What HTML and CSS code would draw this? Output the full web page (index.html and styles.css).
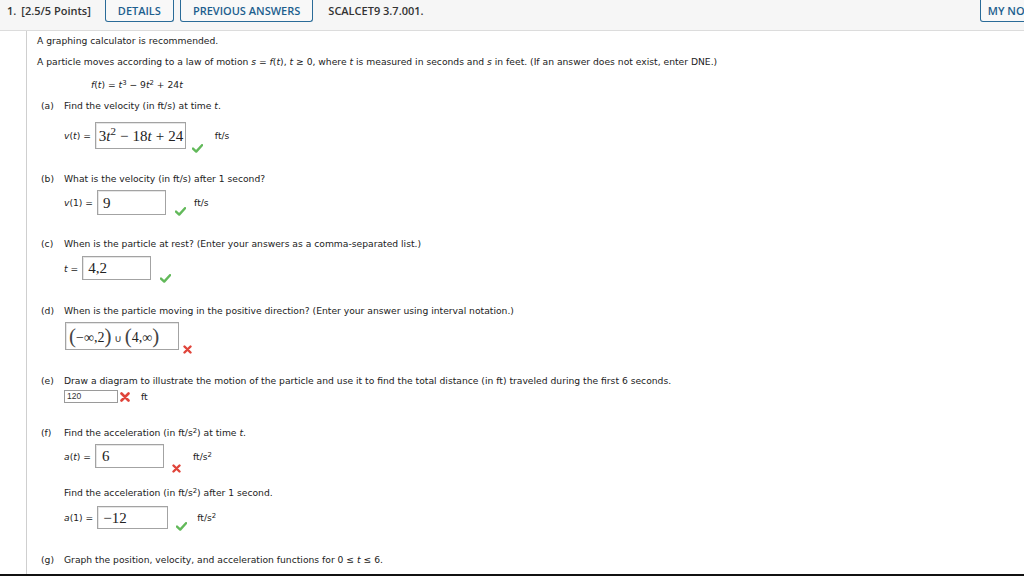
FILE: index.html
```html
<!DOCTYPE html>
<html lang="en">
<head>
<meta charset="utf-8">
<title>SCALCET9 3.7.001</title>
<link rel="stylesheet" href="styles.css">
</head>
<body>
<div class="page">
  <header class="top">
    <span class="qnum"><span class="qn">1.</span>[2.5/5 Points]</span>
    <span class="btn">DETAILS</span>
    <span class="btn btn-prev">PREVIOUS ANSWERS</span>
    <span class="code">SCALCET9 3.7.001.</span>
    <span class="btn btn-notes">MY NOTES</span>
  </header>
  <main class="main">
    <p class="line p1">A graphing calculator is recommended.</p>
    <p class="line p2">A particle moves according to a law of motion <i>s</i> = <i>f</i>(<i>t</i>), <i>t</i> &ge; 0, where <i>t</i> is measured in seconds and <i>s</i> in feet. (If an answer does not exist, enter DNE.)</p>
    <p class="line formula"><i>f</i>(<i>t</i>) = <i>t</i><sup>3</sup> &minus; 9<i>t</i><sup>2</sup> + 24<i>t</i></p>

    <div class="line part part-a"><span class="letter">(a)</span><span>Find the velocity (in ft/s) at time <i>t</i>.</span></div>
    <div class="row row-a">
      <span class="var"><i>v</i>(<i>t</i>) =</span>
      <span class="ans ans-a"><span class="mv">3<i>t</i><sup class="msup">2</sup><span class="op">&minus;</span>18<i>t</i><span class="op">+</span>24</span></span>
      <svg class="mark ok ok-a" width="11" height="9" viewBox="0 0 11 9"><path d="M1 4.6 L4.2 7.6 L10 1.2" fill="none" stroke="#62b95a" stroke-width="2.4" stroke-linecap="round" stroke-linejoin="round"/></svg>
      <span class="unit unit-a">ft/s</span>
    </div>

    <div class="line part part-b"><span class="letter">(b)</span><span>What is the velocity (in ft/s) after 1 second?</span></div>
    <div class="row row-b">
      <span class="var"><i>v</i>(1) =</span>
      <span class="ans ans-b"><span class="mv">9</span></span>
      <svg class="mark ok ok-b" width="11" height="9" viewBox="0 0 11 9"><path d="M1 4.6 L4.2 7.6 L10 1.2" fill="none" stroke="#62b95a" stroke-width="2.4" stroke-linecap="round" stroke-linejoin="round"/></svg>
      <span class="unit unit-b">ft/s</span>
    </div>

    <div class="line part part-c"><span class="letter">(c)</span><span>When is the particle at rest? (Enter your answers as a comma-separated list.)</span></div>
    <div class="row row-c">
      <span class="var"><i>t</i> =</span>
      <span class="ans ans-c"><span class="mv">4,2</span></span>
      <svg class="mark ok ok-c" width="11" height="9" viewBox="0 0 11 9"><path d="M1 4.6 L4.2 7.6 L10 1.2" fill="none" stroke="#62b95a" stroke-width="2.4" stroke-linecap="round" stroke-linejoin="round"/></svg>
    </div>

    <div class="line part part-d"><span class="letter">(d)</span><span>When is the particle moving in the positive direction? (Enter your answer using interval notation.)</span></div>
    <div class="row row-d">
      <span class="ans ans-d"><span class="mv"><span class="paren">(</span>&minus;&infin;,2<span class="paren">)</span><span class="cup">&cup;</span><span class="paren">(</span>4,&infin;<span class="paren">)</span></span></span>
      <svg class="mark bad bad-d" width="9" height="9" viewBox="0 0 9 9"><path d="M1.5 1.5 L7.5 7.5 M7.5 1.5 L1.5 7.5" fill="none" stroke="#e0443a" stroke-width="2.4" stroke-linecap="round"/></svg>
    </div>

    <div class="line part part-e"><span class="letter">(e)</span><span>Draw a diagram to illustrate the motion of the particle and use it to find the total distance (in ft) traveled during the first 6 seconds.</span></div>
    <div class="row row-e">
      <span class="small-input">120</span>
      <svg class="mark bad bad-e" width="10" height="10" viewBox="0 0 10 10"><path d="M1.5 1.5 L8.5 8.5 M8.5 1.5 L1.5 8.5" fill="none" stroke="#e0443a" stroke-width="2.6" stroke-linecap="round"/></svg>
      <span class="unit unit-e">ft</span>
    </div>

    <div class="line part part-f"><span class="letter">(f)</span><span>Find the acceleration (in ft/s<sup>2</sup>) at time <i>t</i>.</span></div>
    <div class="row row-f">
      <span class="var"><i>a</i>(<i>t</i>) =</span>
      <span class="ans ans-f"><span class="mv">6</span></span>
      <svg class="mark bad bad-f" width="9" height="9" viewBox="0 0 9 9"><path d="M1.5 1.5 L7.5 7.5 M7.5 1.5 L1.5 7.5" fill="none" stroke="#e0443a" stroke-width="2.4" stroke-linecap="round"/></svg>
      <span class="unit unit-f">ft/s<sup>2</sup></span>
    </div>

    <p class="line sub">Find the acceleration (in ft/s<sup>2</sup>) after 1 second.</p>
    <div class="row row-f2">
      <span class="var"><i>a</i>(1) =</span>
      <span class="ans ans-f2"><span class="mv">&minus;12</span></span>
      <svg class="mark ok ok-f2" width="11" height="9" viewBox="0 0 11 9"><path d="M1 4.6 L4.2 7.6 L10 1.2" fill="none" stroke="#62b95a" stroke-width="2.4" stroke-linecap="round" stroke-linejoin="round"/></svg>
      <span class="unit unit-f2">ft/s<sup>2</sup></span>
    </div>

    <div class="line part part-g"><span class="letter">(g)</span><span>Graph the position, velocity, and acceleration functions for 0 &le; <i>t</i> &le; 6.</span></div>
  </main>
  <div class="bottombar"></div>
</div>
</body>
</html>
```
FILE: styles.css
```css
html, body {
  margin: 0;
  padding: 0;
  background: #ffffff;
}
.page {
  width: 1024px;
  height: 576px;
  overflow: hidden;
  font-family: "DejaVu Sans", Verdana, sans-serif;
  color: #222;
}
.top {
  display: flex;
  align-items: flex-start;
  height: 30px;
  background: #f6f6f6;
  border-bottom: 1px solid #dcdcdc;
  font-family: "Open Sans", "Liberation Sans", sans-serif;
  font-weight: 600;
  font-size: 11px;
  line-height: 21px;
}
.qnum {
  padding-left: 7px;
  color: #333;
  margin-right: 14px;
  white-space: nowrap;
}
.qn { margin-right: 5px; }
.btn {
  display: block;
  height: 21px;
  padding: 0 12px;
  border: 1px solid #2a6b98;
  border-top: none;
  border-radius: 0 0 3px 3px;
  color: #1d5f8e;
  background: #f8f8f8;
  white-space: nowrap;
}
.btn-prev {
  margin-left: 6px;
}
.code {
  margin-left: 15px;
  color: #333;
}
.btn-notes {
  margin-left: auto;
  margin-right: -27px;
  padding: 0 7px;
}
.main {
  margin-left: 26px;
  border-left: 1px solid #cfcfcf;
  padding-left: 10px;
  padding-top: 4px;
  height: 539px;
  font-size: 9.2px;
}
.line {
  margin: 0;
  height: 11px;
  line-height: 11px;
  white-space: nowrap;
}
sup {
  font-size: 75%;
  line-height: 0;
  vertical-align: 3px;
}
.p2 { margin-top: 10px; }
.formula {
  margin-top: 11px;
  height: 12px;
  line-height: 13px;
  padding-left: 54px;
}
.part { display: flex; padding-left: 4px; }
.letter { width: 23px; }
.part-a { margin-top: 10px; }
.part-b { margin-top: 24px; }
.part-c { margin-top: 23px; }
.part-d { margin-top: 25px; }
.part-e { margin-top: 25px; }
.part-f { margin-top: 24px; }
.sub { margin-top: 19px; padding-left: 27px; }
.part-g { margin-top: 25px; }

.row {
  display: flex;
  align-items: center;
  padding-left: 27px;
}
.row-a { margin-top: 11px; }
.row-b { margin-top: 6px; }
.row-c { margin-top: 7px; }
.row-d { margin-top: 6px; }
.row-e { margin-top: 4px; }
.row-f { margin-top: 6px; }
.row-f2 { margin-top: 8px; }

.var { margin-right: 4px; white-space: nowrap; }
.ans {
  box-sizing: border-box;
  display: flex;
  align-items: center;
  border: 1px solid #a3a3a3;
  box-shadow: inset 1px 1px 0 #e6e6e6;
  font-family: "Liberation Serif", "DejaVu Serif", serif;
  font-size: 15px;
  color: #222;
  padding: 0 5px;
  white-space: nowrap;
}
.mv { display: block; line-height: 18px; }
.msup { font-size: 11px; vertical-align: 6px; }
.op { margin: 0 4px; }
.ans-a { width: 91px; height: 27px; padding-left: 3px; }
.ans-b { width: 69px; height: 25px; }
.ans-c { width: 69px; height: 24px; }
.ans-d { width: 114px; height: 28px; margin-left: 1px; font-size: 14px; padding: 0 3px; }
.ans-f { width: 69px; height: 24px; padding-left: 6px; }
.ans-f2 { width: 71px; height: 23px; }
.paren { font-size: 21px; line-height: 1; position: relative; top: 1px; color: #444; }
.cup { margin: 0 3px; font-family: "DejaVu Sans", sans-serif; font-size: 10px; }

.mark { display: block; flex: none; }
.ok, .bad { align-self: flex-end; }
.ok-a { margin-left: 6px; margin-bottom: -4px; }
.ok-b { margin-left: 9px; margin-bottom: -1px; }
.ok-c { margin-left: 9px; margin-bottom: -3px; }
.bad-d { margin-left: 4px; margin-bottom: -4px; }
.bad-e { margin-left: 2px; align-self: center; }
.bad-f { margin-left: 8px; margin-bottom: -5px; }
.ok-f2 { margin-left: 8px; margin-bottom: -2px; }

.unit { white-space: nowrap; }
.unit-a { margin-left: 12px; }
.unit-b { margin-left: 8px; }
.unit-e { margin-left: 11px; }
.unit-f { margin-left: 12px; }
.unit-f2 { margin-left: 10px; }

.small-input {
  box-sizing: border-box;
  width: 54px;
  height: 13px;
  border: 1px solid #9a9a9a;
  font-family: "Liberation Sans", Arial, sans-serif;
  font-size: 8.5px;
  line-height: 11px;
  padding-left: 2px;
  color: #333;
}
.bottombar {
  height: 2px;
  background: #111;
}
```
